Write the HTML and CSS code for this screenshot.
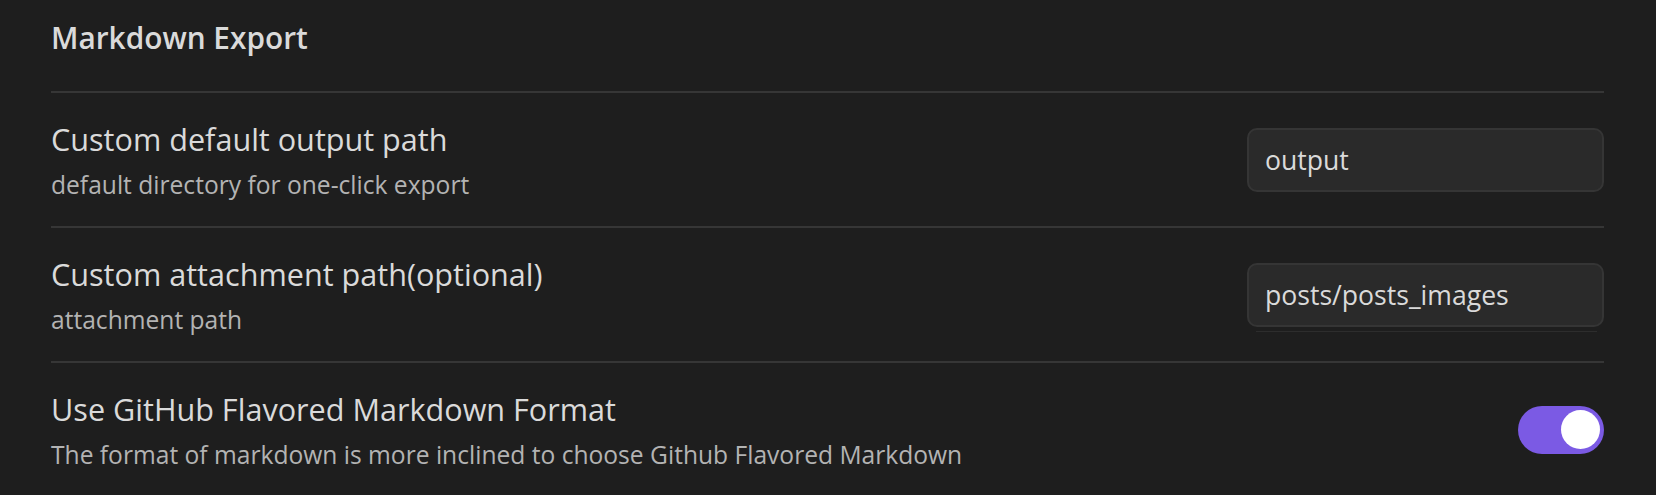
FILE: index.html
```html
<!DOCTYPE html>
<html lang="en">
<head>
<meta charset="utf-8">
<title>Markdown Export settings</title>
<link rel="stylesheet" href="styles.css">
</head>
<body>
<div class="settings">
  <div class="section-heading">Markdown Export</div>

  <div class="item">
    <div class="info">
      <div class="name">Custom default output path</div>
      <div class="desc">default directory for one-click export</div>
    </div>
    <div class="control">
      <input class="text-input" type="text" value="output">
    </div>
  </div>

  <div class="item">
    <div class="info">
      <div class="name">Custom attachment path(optional)</div>
      <div class="desc">attachment path</div>
    </div>
    <div class="control">
      <div class="field underlined">
        <input class="text-input" type="text" value="posts/posts_images">
      </div>
    </div>
  </div>

  <div class="item">
    <div class="info">
      <div class="name">Use GitHub Flavored Markdown Format</div>
      <div class="desc">The format of markdown is more inclined to choose Github Flavored Markdown</div>
    </div>
    <div class="control">
      <div class="toggle is-on"><div class="knob"></div></div>
    </div>
  </div>
</div>
</body>
</html>
```
FILE: styles.css
```css
html, body {
  margin: 0;
  padding: 0;
  background: #1e1e1e;
  overflow: hidden;
}

body {
  font-family: "Open Sans", "Noto Sans", sans-serif;
  color: #dadada;
}

.settings {
  padding: 0 52px 0 51px;
}

.section-heading {
  font-size: 29.8px;
  font-weight: 600;
  line-height: 40px;
  padding: 18px 0 33px 0;
  color: #dadada;
}

.item {
  display: flex;
  align-items: center;
  justify-content: space-between;
  height: 135px;
  box-sizing: border-box;
  border-top: 2px solid #363636;
}

.info {
  display: flex;
  flex-direction: column;
  gap: 8px;
  padding-top: 2px;
}

.name {
  font-size: 30.6px;
  line-height: 40px;
  color: #dadada;
}

.desc {
  font-size: 24.6px;
  line-height: 36px;
  color: #b3b3b3;
}

.control {
  display: flex;
  align-items: center;
}

.field {
  position: relative;
  display: flex;
}

.underlined::after {
  content: "";
  position: absolute;
  left: 9px;
  right: 7px;
  top: calc(100% + 4px);
  height: 1px;
  background: #2d2d2d;
}

.text-input {
  width: 357px;
  height: 64px;
  box-sizing: border-box;
  padding: 0 16px;
  border: 2px solid #353535;
  border-radius: 10px;
  background: #2a2a2a;
  color: #dadada;
  font-family: "Open Sans", "Noto Sans", sans-serif;
  font-size: 26.6px;
  outline: none;
}

.toggle {
  width: 86px;
  height: 48px;
  box-sizing: border-box;
  border-radius: 24px;
  background: #7b5ae4;
  display: flex;
  align-items: center;
  justify-content: flex-end;
  padding-right: 4px;
}

.knob {
  width: 39px;
  height: 39px;
  border-radius: 50%;
  background: #ffffff;
}
```
